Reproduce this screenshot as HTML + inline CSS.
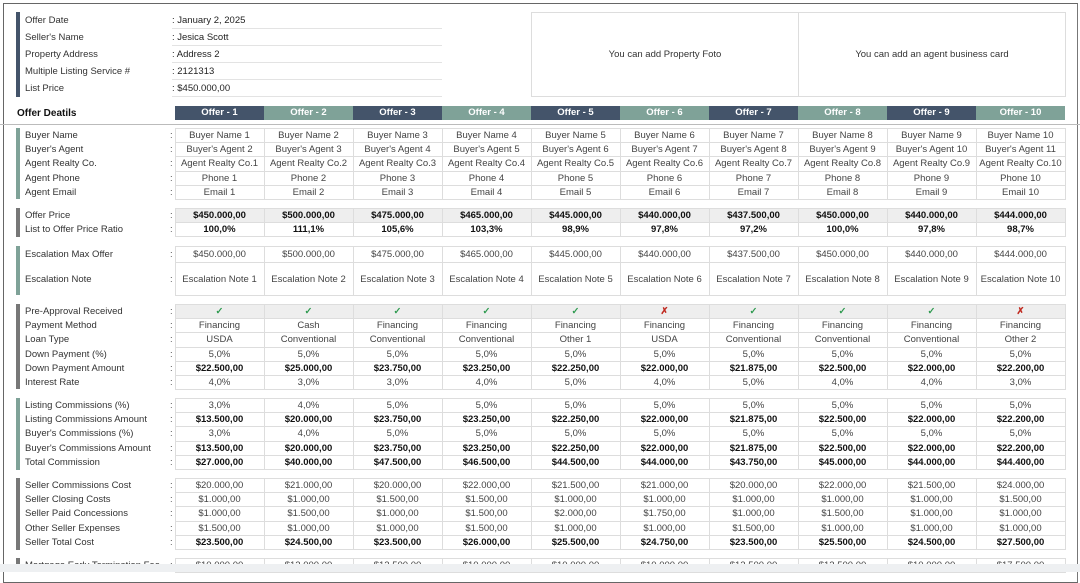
<!DOCTYPE html>
<html><head><meta charset="utf-8"><style>
*{margin:0;padding:0;box-sizing:border-box}
body{width:1080px;height:572px;overflow:hidden;background:#fff;font-family:"Liberation Sans",sans-serif;color:#333;position:relative}
.frame{position:absolute;left:3px;top:3px;width:1075px;height:580px;border:1px solid #666;border-right-color:#777}
.bar{position:absolute;left:16px;width:4px}
.info .v{position:absolute;left:172px;width:270px;font-size:9.5px;border-bottom:1px solid #e3e3e3;height:17px;line-height:17px;color:#222}
.info .l{position:absolute;left:25px;font-size:9.5px;line-height:17px;color:#333}
.box{position:absolute;top:12px;height:85px;border:1px solid #ddd;font-size:9.5px;display:flex;align-items:center;justify-content:center;color:#333}
.hdr{position:absolute;top:106px;height:14px;width:89px;color:#fff;font-weight:bold;font-size:9.5px;text-align:center;line-height:14px}
.d{background:#44546a}.t{background:#7fa298}
table{position:absolute;left:22px;border-collapse:collapse;table-layout:fixed}
td{font-size:9.5px;white-space:nowrap;overflow:hidden;padding:0;height:14.2px;line-height:13px}
td.l{width:148px;padding-left:3px;color:#333}
td.c{width:5px;color:#555}
td.o{width:89px;text-align:center;border:1px solid #ddd;color:#444}
tr.b td.o{font-weight:bold;color:#111}
tr.g td.o{background:#eee}
td.o.ok{color:#2e9a4f;font-weight:bold}td.o.no{color:#c0281e;font-weight:bold}
</style></head><body>
<div class="frame"></div>

<div class="bar" style="top:12px;height:85px;background:#44546a"></div>
<div class="info">
<div class="l" style="top:12px">Offer Date</div><div class="v" style="top:12px">: January 2, 2025</div>
<div class="l" style="top:29px">Seller's Name</div><div class="v" style="top:29px">: Jesica Scott</div>
<div class="l" style="top:46px">Property Address</div><div class="v" style="top:46px">: Address 2</div>
<div class="l" style="top:63px">Multiple Listing Service #</div><div class="v" style="top:63px">: 2121313</div>
<div class="l" style="top:80px">List Price</div><div class="v" style="top:80px">: $450.000,00</div>
</div>
<div class="box" style="left:531px;width:268px">You can add Property Foto</div>
<div class="box" style="left:798px;width:268px">You can add an agent business card</div>

<div style="position:absolute;left:17px;top:108px;font-weight:bold;font-size:10px;color:#111">Offer Deatils</div>
<div class="hdr d" style="left:175px">Offer - 1</div>
<div class="hdr t" style="left:264px">Offer - 2</div>
<div class="hdr d" style="left:353px">Offer - 3</div>
<div class="hdr t" style="left:442px">Offer - 4</div>
<div class="hdr d" style="left:531px">Offer - 5</div>
<div class="hdr t" style="left:620px">Offer - 6</div>
<div class="hdr d" style="left:709px">Offer - 7</div>
<div class="hdr t" style="left:798px">Offer - 8</div>
<div class="hdr d" style="left:887px">Offer - 9</div>
<div class="hdr t" style="left:976px">Offer - 10</div>
<div style="position:absolute;left:0;top:124px;width:1080px;height:1px;background:#bbb"></div>

<div class="bar" style="top:128px;height:71px;background:#7fa298"></div>
<table style="top:128px">
<tr><td class="l">Buyer Name</td><td class="c">:</td><td class="o">Buyer Name 1</td><td class="o">Buyer Name 2</td><td class="o">Buyer Name 3</td><td class="o">Buyer Name 4</td><td class="o">Buyer Name 5</td><td class="o">Buyer Name 6</td><td class="o">Buyer Name 7</td><td class="o">Buyer Name 8</td><td class="o">Buyer Name 9</td><td class="o">Buyer Name 10</td></tr>
<tr><td class="l">Buyer's Agent</td><td class="c">:</td><td class="o">Buyer's Agent 2</td><td class="o">Buyer's Agent 3</td><td class="o">Buyer's Agent 4</td><td class="o">Buyer's Agent 5</td><td class="o">Buyer's Agent 6</td><td class="o">Buyer's Agent 7</td><td class="o">Buyer's Agent 8</td><td class="o">Buyer's Agent 9</td><td class="o">Buyer's Agent 10</td><td class="o">Buyer's Agent 11</td></tr>
<tr><td class="l">Agent Realty Co.</td><td class="c">:</td><td class="o">Agent Realty Co.1</td><td class="o">Agent Realty Co.2</td><td class="o">Agent Realty Co.3</td><td class="o">Agent Realty Co.4</td><td class="o">Agent Realty Co.5</td><td class="o">Agent Realty Co.6</td><td class="o">Agent Realty Co.7</td><td class="o">Agent Realty Co.8</td><td class="o">Agent Realty Co.9</td><td class="o">Agent Realty Co.10</td></tr>
<tr><td class="l">Agent Phone</td><td class="c">:</td><td class="o">Phone 1</td><td class="o">Phone 2</td><td class="o">Phone 3</td><td class="o">Phone 4</td><td class="o">Phone 5</td><td class="o">Phone 6</td><td class="o">Phone 7</td><td class="o">Phone 8</td><td class="o">Phone 9</td><td class="o">Phone 10</td></tr>
<tr><td class="l">Agent Email</td><td class="c">:</td><td class="o">Email 1</td><td class="o">Email 2</td><td class="o">Email 3</td><td class="o">Email 4</td><td class="o">Email 5</td><td class="o">Email 6</td><td class="o">Email 7</td><td class="o">Email 8</td><td class="o">Email 9</td><td class="o">Email 10</td></tr>
</table>

<div class="bar" style="top:208px;height:29px;background:#777"></div>
<table style="top:208px">
<tr class="b g"><td class="l">Offer Price</td><td class="c">:</td><td class="o">$450.000,00</td><td class="o">$500.000,00</td><td class="o">$475.000,00</td><td class="o">$465.000,00</td><td class="o">$445.000,00</td><td class="o">$440.000,00</td><td class="o">$437.500,00</td><td class="o">$450.000,00</td><td class="o">$440.000,00</td><td class="o">$444.000,00</td></tr>
<tr class="b"><td class="l">List to Offer Price Ratio</td><td class="c">:</td><td class="o">100,0%</td><td class="o">111,1%</td><td class="o">105,6%</td><td class="o">103,3%</td><td class="o">98,9%</td><td class="o">97,8%</td><td class="o">97,2%</td><td class="o">100,0%</td><td class="o">97,8%</td><td class="o">98,7%</td></tr>
</table>

<div class="bar" style="top:246px;height:49px;background:#7fa298"></div>
<table style="top:246px">
<tr><td class="l" style="height:16px">Escalation Max Offer</td><td class="c">:</td><td class="o">$450.000,00</td><td class="o">$500.000,00</td><td class="o">$475.000,00</td><td class="o">$465.000,00</td><td class="o">$445.000,00</td><td class="o">$440.000,00</td><td class="o">$437.500,00</td><td class="o">$450.000,00</td><td class="o">$440.000,00</td><td class="o">$444.000,00</td></tr>
<tr><td class="l" style="height:33px">Escalation Note</td><td class="c">:</td><td class="o">Escalation Note 1</td><td class="o">Escalation Note 2</td><td class="o">Escalation Note 3</td><td class="o">Escalation Note 4</td><td class="o">Escalation Note 5</td><td class="o">Escalation Note 6</td><td class="o">Escalation Note 7</td><td class="o">Escalation Note 8</td><td class="o">Escalation Note 9</td><td class="o">Escalation Note 10</td></tr>
</table>

<div class="bar" style="top:304px;height:85px;background:#777"></div>
<table style="top:304px">
<tr class="g"><td class="l">Pre-Approval Received</td><td class="c">:</td><td class="o ok">✓</td><td class="o ok">✓</td><td class="o ok">✓</td><td class="o ok">✓</td><td class="o ok">✓</td><td class="o no">✗</td><td class="o ok">✓</td><td class="o ok">✓</td><td class="o ok">✓</td><td class="o no">✗</td></tr>
<tr><td class="l">Payment Method</td><td class="c">:</td><td class="o">Financing</td><td class="o">Cash</td><td class="o">Financing</td><td class="o">Financing</td><td class="o">Financing</td><td class="o">Financing</td><td class="o">Financing</td><td class="o">Financing</td><td class="o">Financing</td><td class="o">Financing</td></tr>
<tr><td class="l">Loan Type</td><td class="c">:</td><td class="o">USDA</td><td class="o">Conventional</td><td class="o">Conventional</td><td class="o">Conventional</td><td class="o">Other 1</td><td class="o">USDA</td><td class="o">Conventional</td><td class="o">Conventional</td><td class="o">Conventional</td><td class="o">Other 2</td></tr>
<tr><td class="l">Down Payment (%)</td><td class="c">:</td><td class="o">5,0%</td><td class="o">5,0%</td><td class="o">5,0%</td><td class="o">5,0%</td><td class="o">5,0%</td><td class="o">5,0%</td><td class="o">5,0%</td><td class="o">5,0%</td><td class="o">5,0%</td><td class="o">5,0%</td></tr>
<tr class="b"><td class="l">Down Payment Amount</td><td class="c">:</td><td class="o">$22.500,00</td><td class="o">$25.000,00</td><td class="o">$23.750,00</td><td class="o">$23.250,00</td><td class="o">$22.250,00</td><td class="o">$22.000,00</td><td class="o">$21.875,00</td><td class="o">$22.500,00</td><td class="o">$22.000,00</td><td class="o">$22.200,00</td></tr>
<tr><td class="l">Interest Rate</td><td class="c">:</td><td class="o">4,0%</td><td class="o">3,0%</td><td class="o">3,0%</td><td class="o">4,0%</td><td class="o">5,0%</td><td class="o">4,0%</td><td class="o">5,0%</td><td class="o">4,0%</td><td class="o">4,0%</td><td class="o">3,0%</td></tr>
</table>

<div class="bar" style="top:398px;height:72px;background:#7fa298"></div>
<table style="top:398px">
<tr><td class="l">Listing Commissions (%)</td><td class="c">:</td><td class="o">3,0%</td><td class="o">4,0%</td><td class="o">5,0%</td><td class="o">5,0%</td><td class="o">5,0%</td><td class="o">5,0%</td><td class="o">5,0%</td><td class="o">5,0%</td><td class="o">5,0%</td><td class="o">5,0%</td></tr>
<tr class="b"><td class="l">Listing Commissions Amount</td><td class="c">:</td><td class="o">$13.500,00</td><td class="o">$20.000,00</td><td class="o">$23.750,00</td><td class="o">$23.250,00</td><td class="o">$22.250,00</td><td class="o">$22.000,00</td><td class="o">$21.875,00</td><td class="o">$22.500,00</td><td class="o">$22.000,00</td><td class="o">$22.200,00</td></tr>
<tr><td class="l">Buyer's Commissions (%)</td><td class="c">:</td><td class="o">3,0%</td><td class="o">4,0%</td><td class="o">5,0%</td><td class="o">5,0%</td><td class="o">5,0%</td><td class="o">5,0%</td><td class="o">5,0%</td><td class="o">5,0%</td><td class="o">5,0%</td><td class="o">5,0%</td></tr>
<tr class="b"><td class="l">Buyer's Commissions Amount</td><td class="c">:</td><td class="o">$13.500,00</td><td class="o">$20.000,00</td><td class="o">$23.750,00</td><td class="o">$23.250,00</td><td class="o">$22.250,00</td><td class="o">$22.000,00</td><td class="o">$21.875,00</td><td class="o">$22.500,00</td><td class="o">$22.000,00</td><td class="o">$22.200,00</td></tr>
<tr class="b"><td class="l">Total Commission</td><td class="c">:</td><td class="o">$27.000,00</td><td class="o">$40.000,00</td><td class="o">$47.500,00</td><td class="o">$46.500,00</td><td class="o">$44.500,00</td><td class="o">$44.000,00</td><td class="o">$43.750,00</td><td class="o">$45.000,00</td><td class="o">$44.000,00</td><td class="o">$44.400,00</td></tr>
</table>

<div class="bar" style="top:478px;height:72px;background:#777"></div>
<table style="top:478px">
<tr><td class="l">Seller Commissions Cost</td><td class="c">:</td><td class="o">$20.000,00</td><td class="o">$21.000,00</td><td class="o">$20.000,00</td><td class="o">$22.000,00</td><td class="o">$21.500,00</td><td class="o">$21.000,00</td><td class="o">$20.000,00</td><td class="o">$22.000,00</td><td class="o">$21.500,00</td><td class="o">$24.000,00</td></tr>
<tr><td class="l">Seller Closing Costs</td><td class="c">:</td><td class="o">$1.000,00</td><td class="o">$1.000,00</td><td class="o">$1.500,00</td><td class="o">$1.500,00</td><td class="o">$1.000,00</td><td class="o">$1.000,00</td><td class="o">$1.000,00</td><td class="o">$1.000,00</td><td class="o">$1.000,00</td><td class="o">$1.500,00</td></tr>
<tr><td class="l">Seller Paid Concessions</td><td class="c">:</td><td class="o">$1.000,00</td><td class="o">$1.500,00</td><td class="o">$1.000,00</td><td class="o">$1.500,00</td><td class="o">$2.000,00</td><td class="o">$1.750,00</td><td class="o">$1.000,00</td><td class="o">$1.500,00</td><td class="o">$1.000,00</td><td class="o">$1.000,00</td></tr>
<tr><td class="l">Other Seller Expenses</td><td class="c">:</td><td class="o">$1.500,00</td><td class="o">$1.000,00</td><td class="o">$1.000,00</td><td class="o">$1.500,00</td><td class="o">$1.000,00</td><td class="o">$1.000,00</td><td class="o">$1.500,00</td><td class="o">$1.000,00</td><td class="o">$1.000,00</td><td class="o">$1.000,00</td></tr>
<tr class="b"><td class="l">Seller Total Cost</td><td class="c">:</td><td class="o">$23.500,00</td><td class="o">$24.500,00</td><td class="o">$23.500,00</td><td class="o">$26.000,00</td><td class="o">$25.500,00</td><td class="o">$24.750,00</td><td class="o">$23.500,00</td><td class="o">$25.500,00</td><td class="o">$24.500,00</td><td class="o">$27.500,00</td></tr>
</table>

<div class="bar" style="top:558px;height:14px;background:#777"></div>
<table style="top:558px">
<tr><td class="l">Mortgage Early Termination Fee</td><td class="c">:</td><td class="o">$10.000,00</td><td class="o">$12.000,00</td><td class="o">$12.500,00</td><td class="o">$10.000,00</td><td class="o">$10.000,00</td><td class="o">$10.000,00</td><td class="o">$12.500,00</td><td class="o">$12.500,00</td><td class="o">$10.000,00</td><td class="o">$17.500,00</td></tr>
</table>
<div style="position:absolute;left:0;top:564px;width:1080px;height:8px;background:#eef0f2"></div>
</body></html>
